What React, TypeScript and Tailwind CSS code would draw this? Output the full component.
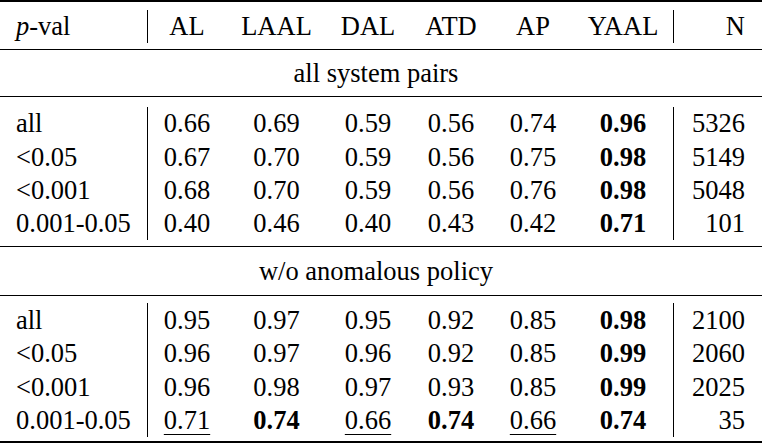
const cols = "grid grid-cols-[148px_78px_101px_82px_84px_80px_101px_88px]";

type Cell = { v: string; b?: boolean; u?: boolean };

const block1: { label: string; vals: Cell[]; n: string }[] = [
  { label: "all", vals: [{ v: "0.66" }, { v: "0.69" }, { v: "0.59" }, { v: "0.56" }, { v: "0.74" }, { v: "0.96", b: true }], n: "5326" },
  { label: "<0.05", vals: [{ v: "0.67" }, { v: "0.70" }, { v: "0.59" }, { v: "0.56" }, { v: "0.75" }, { v: "0.98", b: true }], n: "5149" },
  { label: "<0.001", vals: [{ v: "0.68" }, { v: "0.70" }, { v: "0.59" }, { v: "0.56" }, { v: "0.76" }, { v: "0.98", b: true }], n: "5048" },
  { label: "0.001-0.05", vals: [{ v: "0.40" }, { v: "0.46" }, { v: "0.40" }, { v: "0.43" }, { v: "0.42" }, { v: "0.71", b: true }], n: "101" },
];

const block2: { label: string; vals: Cell[]; n: string }[] = [
  { label: "all", vals: [{ v: "0.95" }, { v: "0.97" }, { v: "0.95" }, { v: "0.92" }, { v: "0.85" }, { v: "0.98", b: true }], n: "2100" },
  { label: "<0.05", vals: [{ v: "0.96" }, { v: "0.97" }, { v: "0.96" }, { v: "0.92" }, { v: "0.85" }, { v: "0.99", b: true }], n: "2060" },
  { label: "<0.001", vals: [{ v: "0.96" }, { v: "0.98" }, { v: "0.97" }, { v: "0.93" }, { v: "0.85" }, { v: "0.99", b: true }], n: "2025" },
  {
    label: "0.001-0.05",
    vals: [{ v: "0.71", u: true }, { v: "0.74", b: true }, { v: "0.66", u: true }, { v: "0.74", b: true }, { v: "0.66", u: true }, { v: "0.74", b: true }],
    n: "35",
  },
];

function Row({ label, vals, n, h }: { label: string; vals: Cell[]; n: string; h: string }) {
  return (
    <div className={`${cols} ${h} items-center`}>
      <div className="h-full flex items-center pl-[16px] border-r border-black">{label}</div>
      {vals.map((c, i) => (
        <div
          key={i}
          className={`h-full flex items-center justify-center ${i === 5 ? "border-r border-black" : ""}`}
        >
          <span
            className={`${c.b ? "font-bold" : ""} ${c.u ? "underline decoration-1 underline-offset-[5px]" : ""}`}
          >
            {c.v}
          </span>
        </div>
      ))}
      <div className="h-full flex items-center justify-end pr-[17px]">{n}</div>
    </div>
  );
}

export default function App() {
  const heads = ["AL", "LAAL", "DAL", "ATD", "AP", "YAAL"];
  return (
    <div className="w-[762px] h-[446px] bg-white text-black text-[26.5px] leading-none font-['Liberation_Serif',serif]">
      <div className="h-[2px] bg-black" />
      <div className="pt-[8px] pb-[6px]">
        <div className={`${cols} h-[33px]`}>
          <div className="h-full flex items-center pl-[16px] border-r border-black">
            <span className="italic">p</span>-val
          </div>
          {heads.map((h, i) => (
            <div key={h} className={`h-full flex items-center justify-center ${i === 5 ? "border-r border-black" : ""}`}>
              {h}
            </div>
          ))}
          <div className="h-full flex items-center justify-end pr-[17px]">N</div>
        </div>
      </div>
      <div className="h-px bg-black" />
      <div className="h-[46px] flex items-center justify-center pr-[10px]">all system pairs</div>
      <div className="h-px bg-black" />
      <div className="pt-[10px] pb-[6px]">
        {block1.map((r) => (
          <Row key={r.label} {...r} h="h-[33.25px]" />
        ))}
      </div>
      <div className="h-px bg-black" />
      <div className="h-[48px] flex items-center justify-center pr-[10px]">w/o anomalous policy</div>
      <div className="h-px bg-black" />
      <div className="pt-[7px] pb-[4px]">
        {block2.map((r) => (
          <Row key={r.label} {...r} h="h-[33.5px]" />
        ))}
      </div>
      <div className="h-[2px] bg-black" />
    </div>
  );
}
